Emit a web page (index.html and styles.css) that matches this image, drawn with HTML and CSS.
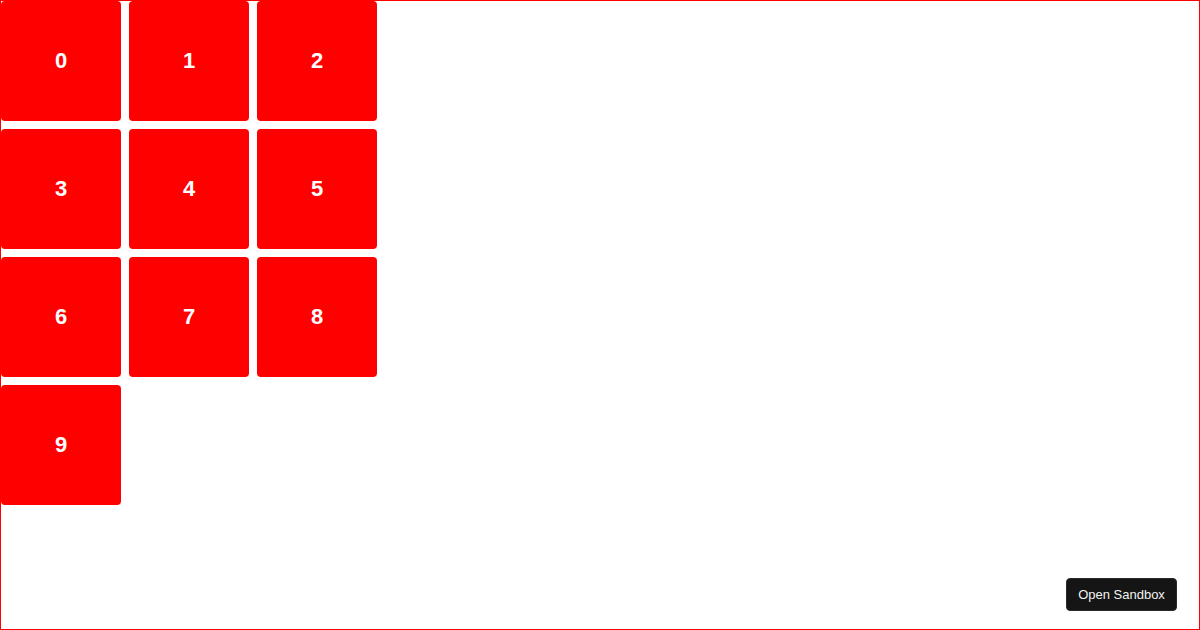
FILE: index.html
```html
<!DOCTYPE html>
<html>
<head>
<meta charset="utf-8">
<link rel="stylesheet" href="styles.css">
</head>
<body>
<div class="frame">
  <div class="grid">
    <div class="tile">0</div>
    <div class="tile">1</div>
    <div class="tile">2</div>
    <div class="tile">3</div>
    <div class="tile">4</div>
    <div class="tile">5</div>
    <div class="tile">6</div>
    <div class="tile">7</div>
    <div class="tile">8</div>
    <div class="tile">9</div>
  </div>
  <button class="sandbox">Open Sandbox</button>
</div>
</body>
</html>
```

FILE: styles.css
```css
html, body {
  margin: 0;
  padding: 0;
  background: #fff;
}
.frame {
  position: relative;
  width: 1200px;
  height: 630px;
  box-sizing: border-box;
  border: 1px solid #ff0000;
  font-family: "Liberation Sans", Arial, sans-serif;
}
.grid {
  display: grid;
  grid-template-columns: repeat(3, 120px);
  grid-auto-rows: 120px;
  gap: 8px;
}
.tile {
  background: #ff0000;
  border-radius: 4px;
  color: #fff;
  font-weight: bold;
  font-size: 22px;
  display: flex;
  align-items: center;
  justify-content: center;
}
.sandbox {
  position: absolute;
  right: 22px;
  bottom: 18px;
  width: 111px;
  height: 33px;
  background: #151515;
  color: #f2f2f2;
  border: 1px solid #2a2a2a;
  border-radius: 4px;
  font-family: "Liberation Sans", Arial, sans-serif;
  font-size: 13px;
  padding: 0;
  cursor: pointer;
}
```
